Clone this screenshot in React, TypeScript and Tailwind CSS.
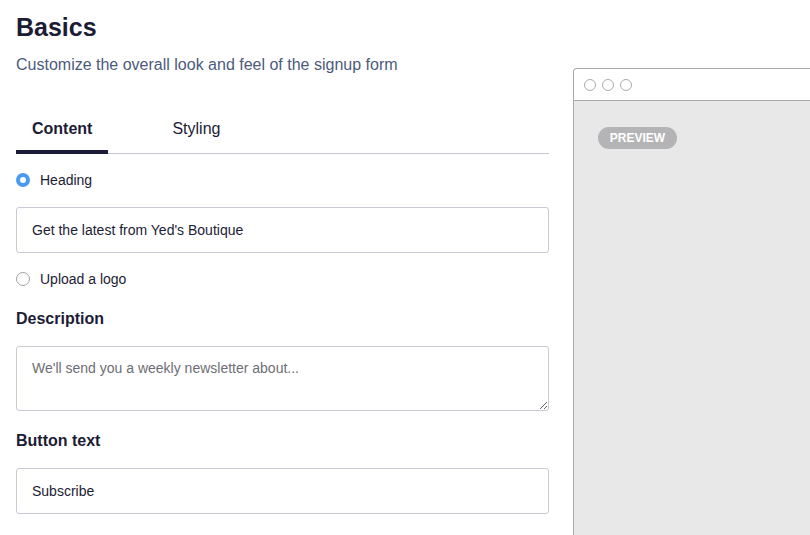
export default function App() {
  return (
    <div
      className="flex w-[810px] h-[535px] overflow-hidden bg-white"
      style={{ fontFamily: '"Liberation Sans", Arial, sans-serif' }}
    >
      <div className="w-[533px] shrink-0 ml-4 flex flex-col">
        <h1 className="mt-3 text-[25px] leading-[30px] font-bold text-[#1d1c35]">Basics</h1>
        <p className="mt-[11px] text-base leading-6 text-[#4d5a7c]">
          Customize the overall look and feel of the signup form
        </p>

        <div className="mt-7 flex gap-16 border-b border-[#c4c6cf]">
          <button className="-mb-px px-4 pt-3 pb-[9px] text-base leading-6 font-bold text-[#1d1c35] border-b-4 border-[#1d1c35]">
            Content
          </button>
          <button className="-mb-px px-0 pt-3 pb-[9px] text-base leading-6 text-[#1d1c35] border-b-4 border-transparent">
            Styling
          </button>
        </div>

        <label className="mt-[14px] flex items-center gap-[10px] h-6 text-[14px] text-[#1d1c35]">
          <span className="w-[14px] h-[14px] rounded-full bg-[#4a9af4] flex items-center justify-center">
            <span className="w-[6px] h-[6px] rounded-full bg-white" />
          </span>
          Heading
        </label>

        <input
          className="mt-[15px] h-[46px] w-full rounded-[3px] border border-[#c8cad6] px-[15px] text-[14px] text-[#1d1c35] outline-none"
          defaultValue="Get the latest from Yed's Boutique"
        />

        <label className="mt-[14px] flex items-center gap-[10px] h-6 text-[14px] text-[#1d1c35]">
          <span className="w-[14px] h-[14px] rounded-full border border-[#a3a3a3] bg-white" />
          Upload a logo
        </label>

        <div className="mt-4 text-base leading-6 font-bold text-[#1d1c35]">Description</div>
        <textarea
          className="mt-[15px] h-[65px] w-full rounded-[3px] border border-[#c8cad6] px-[15px] py-[10px] text-[14px] leading-[22px] text-[#1d1c35] placeholder:text-[#6d6e75] outline-none"
          placeholder="We'll send you a weekly newsletter about..."
        />

        <div className="mt-[18px] text-base leading-6 font-bold text-[#1d1c35]">Button text</div>
        <input
          className="mt-[15px] h-[46px] w-full rounded-[3px] border border-[#c8cad6] px-[15px] text-[14px] text-[#1d1c35] outline-none"
          defaultValue="Subscribe"
        />
      </div>

      <div className="ml-6 mt-[68px] w-[300px] shrink-0 flex flex-col rounded-tl-[4px] border-l border-t border-[#a9a9a9] bg-[#e8e8e8]">
        <div className="h-[32px] bg-white rounded-tl-[4px] border-b border-[#a9a9a9] flex items-center gap-[6px] pl-[10px]">
          <span className="w-3 h-3 rounded-full border border-[#ababab]" />
          <span className="w-3 h-3 rounded-full border border-[#ababab]" />
          <span className="w-3 h-3 rounded-full border border-[#ababab]" />
        </div>
        <div className="p-6">
          <span className="inline-flex items-center justify-center h-[22px] w-[79px] rounded-full bg-[#b4b4b6] text-[12px] font-bold text-white">
            PREVIEW
          </span>
        </div>
      </div>
    </div>
  );
}
